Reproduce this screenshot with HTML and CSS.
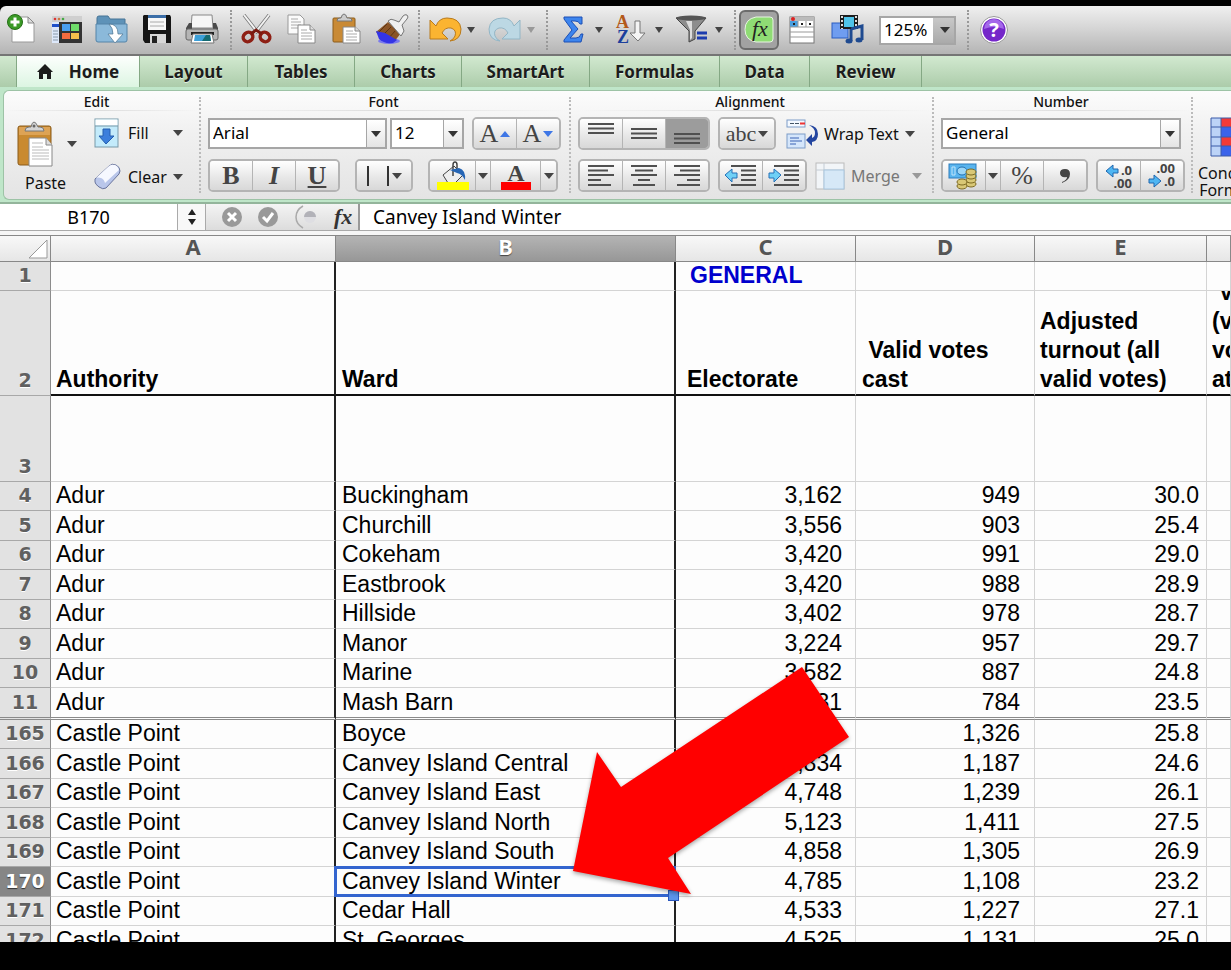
FILE: index.html
```html
<!DOCTYPE html>
<html lang="en">
<head>
<meta charset="utf-8">
<title>Workbook</title>
<link rel="stylesheet" href="styles.css">
</head>
<body>
<div class="app">
  <header class="toolbar">
    <div class="tools tools-file">
      <button class="tool" aria-label="New"><svg width="37" height="32" viewBox="0 0 37 32"><path d="M8 3h16l6 6v19H8z" fill="#fff" stroke="#999"/><path d="M24 3v6h6z" fill="#ddd" stroke="#888"/><circle cx="11" cy="8" r="7.500" fill="#3a9a26" stroke="#256f16"/><path d="M11 3.500v9M6.500 8h9" stroke="#fff" stroke-width="3"/></svg></button>
      <button class="tool" aria-label="Gallery"><svg width="37" height="32" viewBox="0 0 37 32"><rect x="3" y="2" width="30" height="27" fill="#333"/><rect x="3" y="2" width="30" height="6" fill="#cfcfcf"/><circle cx="6" cy="5" r="1.300" fill="#d33"/><circle cx="10" cy="5" r="1.300" fill="#c74"/><circle cx="14" cy="5" r="1.300" fill="#4a4"/><rect x="3" y="8" width="7" height="21" fill="#dde8fa"/><rect x="3" y="10" width="7" height="3" fill="#2050c8"/><path d="M4 17h5M4 20h5M4 23h5M4 26h5" stroke="#89a"/><rect x="13" y="10" width="8" height="7" fill="#4a9ff0"/><rect x="22" y="10" width="8" height="7" fill="#6fdc6a"/><rect x="13" y="19" width="8" height="6" fill="#f36b40"/><rect x="22" y="19" width="8" height="6" fill="#f5bf4c"/></svg></button>
      <button class="tool" aria-label="Open"><svg width="37" height="32" viewBox="0 0 37 32"><path d="M3 27V4q0-2 2-2h9l2 3h15v22z" fill="#5e92b8" stroke="#467596"/><path d="M2 10h31v16q0 2-2 2H4q-2 0-2-2z" fill="#8bb9da" stroke="#5484a8"/><path d="M15 10q9 0 9 10h5l-8 9-7-9h5q0-6-4-10z" fill="#fff" stroke="#4d7491" stroke-width=".7"/></svg></button>
      <button class="tool" aria-label="Save"><svg width="37" height="32" viewBox="0 0 37 32"><path d="M5 1h26l1 2v26H6l-2-3V2z" fill="#151515"/><path d="M9 1h18v15H9z" fill="#f7f7f7"/><path d="M9 1h18v3H9z" fill="#3b6ea8"/><path d="M11 8h14M11 12h14" stroke="#aaa"/><path d="M11 20h16v9H11z" fill="#d7d7d7"/><path d="M13 22h5v7h-5z" fill="#222"/></svg></button>
      <button class="tool" aria-label="Print"><svg width="37" height="32" viewBox="0 0 37 32"><path d="M7 14L8 1h20l1 13z" fill="#f6f6f6" stroke="#888"/><path d="M5 9h3v6h21V9h3l2 5v7H2v-7z" fill="#4a4a4a"/><rect x="2" y="15" width="32" height="11" rx="2" fill="#b5b5b5" stroke="#666"/><rect x="7" y="18" width="23" height="3" fill="#222"/><path d="M9 20h19l2 9H7z" fill="#fff" stroke="#777"/><path d="M11 21h15l1 6H10z" fill="#3c9fd8"/><path d="M18 27l4-6h4l1 6z" fill="#146b72"/></svg></button>
    </div>
    <span class="dots"></span>
    <div class="tools">
      <button class="tool" aria-label="Cut"><svg width="37" height="32" viewBox="0 0 37 32"><path d="M5 1l14 18M30 1L16 19" stroke="#777" stroke-width="3.500"/><path d="M5 1l14 18M30 1L16 19" stroke="#f2f2f2" stroke-width="2"/><ellipse cx="9" cy="23" rx="5" ry="4.500" fill="none" stroke="#8e1f14" stroke-width="3.500" transform="rotate(-40 9 23)"/><ellipse cx="26" cy="23" rx="5" ry="4.500" fill="none" stroke="#8e1f14" stroke-width="3.500" transform="rotate(40 26 23)"/><path d="M12 20l5-4 6 4" fill="none" stroke="#7a1a10" stroke-width="3"/></svg></button>
      <button class="tool" aria-label="Copy"><svg width="37" height="32" viewBox="0 0 37 32"><path d="M4 1h12l4 4v15H4z" fill="#fbfbfb" stroke="#999"/><path d="M7 5h7M7 8h10M7 11h10M7 14h10" stroke="#aaa"/><path d="M14 11h12l5 5v13H14z" fill="#fff" stroke="#888"/><path d="M26 11v5h5" fill="#ddd" stroke="#888"/><path d="M17 16h6M17 19h11M17 22h11M17 25h11" stroke="#aaa"/></svg></button>
      <button class="tool" aria-label="Paste from clipboard"><svg width="37" height="32" viewBox="0 0 37 32"><rect x="4" y="4" width="22" height="24" rx="1" fill="#c98a35" stroke="#8b5c1d"/><path d="M8 7q0-3 3-3h1q1-4 3-4t3 4h2q3 0 3 3z" fill="#ccc" stroke="#777"/><path d="M14 13h12l5 4v12H14z" fill="#fff" stroke="#888"/><path d="M26 13v4h5" fill="#ddd" stroke="#888"/><path d="M17 17h7M17 20h11M17 23h11M17 26h11" stroke="#aaa"/></svg></button>
      <button class="tool" aria-label="Format painter"><svg width="37" height="32" viewBox="0 0 37 32"><ellipse cx="15" cy="27" rx="11" ry="3" fill="#5b5bff" opacity=".7"/><path d="M14 8l13 11-7 9-9-1-9-9z" fill="#8a5426"/><path d="M13 10l-8 8M17 13l-8 8M21 17l-7 8" stroke="#5d3413"/><path d="M2 17l9 2 12 7-4 3q-9 1-14-4z" fill="#3434e6"/><path d="M14 7q3-3 6-1l5 2 4-6q2-2 4-1 2 2 0 4l-5 6 2 6-3 5z" fill="#f0f0f0" stroke="#777"/></svg></button>
    </div>
    <span class="dots"></span>
    <div class="tools">
      <button class="tool tool-menu" aria-label="Undo"><svg width="36" height="32" viewBox="0 0 36 32"><path d="M3 6v19h18l-6-6q3-6 9-5 6 2 4 8-1 3-5 5 11-1 11-12Q33 4 20 4q-8 0-11 8z" fill="#fbb431" stroke="#b97a1c"/></svg><i class="caret"></i></button>
      <button class="tool tool-menu" aria-label="Redo"><svg width="36" height="32" viewBox="0 0 36 32"><path transform="translate(36 0) scale(-1 1)" d="M3 6v19h18l-6-6q3-6 9-5 6 2 4 8-1 3-5 5 11-1 11-12Q33 4 20 4q-8 0-11 8z" fill="#bcd8e4" stroke="#93b6c6"/></svg><i class="caret caret-off"></i></button>
    </div>
    <span class="dots"></span>
    <div class="tools">
      <button class="tool tool-menu" aria-label="AutoSum"><svg width="36" height="32" viewBox="0 0 36 32"><path d="M9 3h18v7h-2q-1-3-5-3h-4l7 8-8 9h6q4 0 5-4h2l-2 8H9v-2l8-10L9 5z" fill="#3d85ee" stroke="#1c4fb4"/></svg><i class="caret"></i></button>
      <button class="tool tool-menu" aria-label="Sort"><svg width="36" height="32" viewBox="0 0 36 32"><text x="1" y="14" class="glyph-a">A</text><text x="2" y="29" class="glyph-z">Z</text><path d="M20 7h5v12h5l-7 8-8-8h5z" fill="#f4f4f4" stroke="#777"/></svg><i class="caret"></i></button>
      <button class="tool tool-menu" aria-label="Filter"><svg width="36" height="32" viewBox="0 0 36 32"><path d="M1 4h30L20 17v8l-6 3V17z" fill="#8d8d8d" stroke="#444"/><path d="M11 7h6v17l-2 2V16z" fill="#ddd"/><ellipse cx="16" cy="4" rx="15" ry="2.500" fill="#555"/><path d="M22 19h10M22 24h10" stroke="#1c3cae" stroke-width="3"/></svg><i class="caret"></i></button>
    </div>
    <span class="dots"></span>
    <div class="tools tools-view">
      <button class="tool tool-on" aria-label="Formula Builder"><svg width="34" height="32" viewBox="0 0 34 32"><path d="M14 3h14q3 0 3 3v19q0 3-3 3H14Q3 26 3 15.500T14 3z" fill="#8fdc74" stroke="#e8f5e2"/><text x="10" y="22" class="glyph-fx">fx</text></svg></button>
      <button class="tool" aria-label="Form"><svg width="36" height="32" viewBox="0 0 36 32"><rect x="6" y="3" width="24" height="26" fill="#fff" stroke="#777"/><path d="M6 3h24v4H6z" fill="#bbb"/><rect x="6" y="7" width="8" height="6" fill="#4a9fe0"/><circle cx="9" cy="5" r="2" fill="#d22"/><path d="M6 13h24M6 18h24M6 23h24M14 7v6M22 7v6" stroke="#999"/><path d="M9 10h2M17 10h2M25 10h2" stroke="#222" stroke-width="2"/></svg></button>
      <button class="tool" aria-label="Media"><svg width="36" height="32" viewBox="0 0 36 32"><rect x="3" y="9" width="16" height="15" fill="#6f9df0" stroke="#2b5cc0"/><rect x="11" y="1" width="18" height="14" fill="#1d1d1d"/><rect x="15" y="3" width="10" height="10" fill="#4fc4ea"/><path d="M13 2v13M27 2v13" stroke="#ddd" stroke-width="2" stroke-dasharray="2 2"/><path d="M22 15l11-3v14M22 15v12" stroke="#1f4a90" stroke-width="3" fill="none"/><ellipse cx="20" cy="27" rx="3.500" ry="2.500" fill="#1f4a90"/><ellipse cx="30" cy="26" rx="3.500" ry="2.500" fill="#1f4a90"/></svg></button>
    </div>
    <label class="combo combo-zoom"><select aria-label="Zoom"><option>125%</option></select></label>
    <span class="dots dots-end"></span>
    <button class="tool tool-help" aria-label="Help"><svg width="30" height="30" viewBox="0 0 30 30"><circle cx="15" cy="15" r="13.500" fill="#fff" stroke="#999"/><circle cx="15" cy="15" r="11.500" fill="#7527c9"/><path d="M5 14a10 10 0 0 1 20 0q-10-4-20 0z" fill="#a468ea"/><text x="15" y="22" text-anchor="middle" class="glyph-help">?</text></svg></button>
  </header>

  <nav class="tabs">
    <span class="tab-stub"></span>
    <a class="tab tab-active" href="#home"><svg width="16" height="15" viewBox="0 0 16 15"><path d="M8 0l8 8h-2v7h-4v-5H6v5H2V8H0z" fill="#1c1c1c"/></svg>Home</a>
    <a class="tab" href="#layout">Layout</a>
    <a class="tab" href="#tables">Tables</a>
    <a class="tab" href="#charts">Charts</a>
    <a class="tab" href="#smartart">SmartArt</a>
    <a class="tab" href="#formulas">Formulas</a>
    <a class="tab" href="#data">Data</a>
    <a class="tab" href="#review">Review</a>
  </nav>

  <div class="ribbon">
    <div class="panel">
      <section class="group group-edit">
        <h2>Edit</h2>
        <div class="edit-body">
          <button class="plain paste"><span class="paste-icon"><svg width="36" height="46" viewBox="0 0 36 46"><rect x="1" y="5" width="33" height="39" rx="2" fill="#c98a30" stroke="#8a5a18"/><path d="M2 6h31v8H2z" fill="#dda355"/><path d="M8 10q0-4 4-4h2q1-5 3-5t4 5h2q4 0 4 4z" fill="#d4d4d4" stroke="#777"/><circle cx="17" cy="5" r="1.500" fill="#666"/><path d="M12 17h17l6 7v21H12z" fill="#fff" stroke="#888"/><path d="M29 17v7h6" fill="#ddd" stroke="#888"/><path d="M15 22h11M15 26h11M15 29h17M15 32h17M15 35h17M15 38h17" stroke="#bbb"/></svg><i class="caret"></i></span>Paste</button>
          <div class="edit-side">
            <button class="plain"><svg width="28" height="30" viewBox="0 0 28 30"><rect x="2" y="1" width="23" height="28" fill="#c3ebfb" stroke="#7899a8"/><rect x="2.500" y="1.500" width="22" height="6" fill="#fff"/><path d="M2 8h23" stroke="#7899a8"/><path d="M10 11h7v7h4l-8 8-7-8h4z" fill="#3b7fdc" stroke="#245fae"/></svg><span class="side-name">Fill</span><i class="caret"></i></button>
            <button class="plain"><svg width="28" height="30" viewBox="0 0 28 30"><path d="M2 17L16 4q3-3 7-1t4 6l-1 3L13 26q-3 2-7-1t-4-5z" fill="#b9c6ea" stroke="#69749c"/><path d="M3 16L16 4q3-2 6-1t4 5L12 21q-1-4-4-5t-5 0z" fill="#f6f8ff"/></svg><span class="side-name">Clear</span><i class="caret"></i></button>
          </div>
        </div>
      </section>
      <span class="rule"></span>
      <section class="group group-font">
        <h2>Font</h2>
        <div class="row">
          <label class="combo combo-font"><select aria-label="Font"><option>Arial</option></select></label>
          <label class="combo combo-size"><select aria-label="Font size"><option>12</option></select></label>
          <div class="seg"><button class="serif" aria-label="Grow font">A<i class="blue-up"></i></button><button class="serif" aria-label="Shrink font">A<i class="blue-down"></i></button></div>
        </div>
        <div class="row">
          <div class="seg"><button class="serif bold">B</button><button class="serif bold italic">I</button><button class="serif bold under">U</button></div>
          <div class="seg push-b"><button class="w58" aria-label="Borders"><svg width="24" height="22" viewBox="0 0 24 22"><path d="M2 1v20M22 1v20" stroke="#333" stroke-width="2"/></svg><i class="caret"></i></button></div>
          <div class="seg push-b"><button class="w48" aria-label="Fill color"><svg width="32" height="31" viewBox="0 0 32 31"><path d="M6 15L17 6l9 9-8 8H11z" fill="#eee" stroke="#444"/><path d="M16 16V5q0-3 2-3t2 3v5" fill="none" stroke="#444" stroke-width="1.500"/><path d="M13 10l9-2q7 2 6 12-3-6-8-7z" fill="#2766b5"/><rect x="0" y="22" width="32" height="8" fill="#ff0"/></svg></button><button class="w15" aria-label="Fill color menu"><i class="caret"></i></button><button class="w50" aria-label="Font color"><svg width="30" height="31" viewBox="0 0 30 31"><text x="15" y="21" text-anchor="middle" class="glyph-color">A</text><rect x="0" y="22" width="30" height="8" fill="#f00"/></svg></button><button class="w15" aria-label="Font color menu"><i class="caret"></i></button></div>
        </div>
      </section>
      <span class="rule"></span>
      <section class="group group-align">
        <h2>Alignment</h2>
        <div class="row">
          <div class="seg"><button aria-label="Align top"><svg width="26" height="26" viewBox="0 0 26 26"><path d="M0 3h26M0 7.500h26M0 12h26" class="ln"/></svg></button><button aria-label="Align middle"><svg width="26" height="26" viewBox="0 0 26 26"><path d="M0 8h26M0 12.500h26M0 17h26" class="ln"/></svg></button><button class="seg-on" aria-label="Align bottom"><svg width="26" height="26" viewBox="0 0 26 26"><path d="M0 13h26M0 17.500h26M0 22h26" class="ln"/></svg></button></div>
          <div class="seg"><button class="w58 abc">abc<i class="caret"></i></button></div>
          <button class="plain wrap"><svg width="32" height="30" viewBox="0 0 32 30"><rect x="1" y="1" width="18" height="7" fill="#f4f9ff" stroke="#7c9cc8"/><path d="M4 4.500h4M9 4.500h4" stroke="#456"/><path d="M14 4.500h5" stroke="#e33" stroke-width="2"/><rect x="1" y="15" width="18" height="14" fill="#d5e6fb" stroke="#7c9cc8"/><path d="M4 19h9M4 22h12M4 25h6" stroke="#3b62b4"/><path d="M23 6q9 1 9 9 0 7-6 8v4l-6-6 6-6v4q3-1 3-5 0-5-6-8z" fill="#23459f"/></svg>Wrap Text<i class="caret"></i></button>
        </div>
        <div class="row">
          <div class="seg"><button aria-label="Align left"><svg width="26" height="26" viewBox="0 0 26 26"><path d="M0 3h26M0 7.500h20M0 12h26M0 17h13M0 22h23" class="ln"/></svg></button><button aria-label="Center"><svg width="26" height="26" viewBox="0 0 26 26"><path d="M0 3h26M4 7.500h18M0 12h26M7 17h12M2 22h22" class="ln"/></svg></button><button aria-label="Align right"><svg width="26" height="26" viewBox="0 0 26 26"><path d="M0 3h26M6 7.500h20M0 12h26M13 17h13M3 22h23" class="ln"/></svg></button></div>
          <div class="seg"><button aria-label="Decrease indent"><svg width="32" height="26" viewBox="0 0 32 26"><path d="M6 3h25M16 7.500h15M16 12h15M16 17h15M6 22h25" class="ln"/><path d="M0 12l7-6v4h5v5H7v4z" fill="#6fd0f6" stroke="#2470b8"/></svg></button><button aria-label="Increase indent"><svg width="32" height="26" viewBox="0 0 32 26"><path d="M6 3h25M16 7.500h15M16 12h15M16 17h15M6 22h25" class="ln"/><path d="M13 12L6 6v4H1v5h5v4z" fill="#6fd0f6" stroke="#2470b8"/></svg></button></div>
          <button class="plain merge" disabled><svg width="30" height="28" viewBox="0 0 30 28"><rect x="1" y="1" width="28" height="26" fill="#f2f5f8" stroke="#bbb"/><path d="M9 1v26M1 8h28" stroke="#c4ccd4"/><rect x="9" y="8" width="20" height="19" fill="#d6e8f7" stroke="#a9c6de"/></svg>Merge<i class="caret caret-off"></i></button>
        </div>
      </section>
      <span class="rule"></span>
      <section class="group group-number">
        <h2>Number</h2>
        <div class="row">
          <label class="combo combo-number"><select aria-label="Number format"><option>General</option></select></label>
        </div>
        <div class="row">
          <div class="seg"><button aria-label="Currency"><svg width="32" height="28" viewBox="0 0 32 28"><rect x="1" y="2" width="27" height="14" fill="#58b4ee" stroke="#2c7dbc"/><ellipse cx="14" cy="9" rx="5" ry="4" fill="#9bd6f7" stroke="#2471b0"/><path d="M4 5h3v8H4z" fill="none" stroke="#bfe4fa"/><g fill="#d9c876" stroke="#7d6a22"><ellipse cx="23" cy="22" rx="5" ry="3"/><ellipse cx="23" cy="18" rx="5" ry="3"/><ellipse cx="23" cy="14" rx="5" ry="3"/><ellipse cx="23" cy="10" rx="5" ry="3"/><ellipse cx="14" cy="24" rx="5" ry="3"/><ellipse cx="14" cy="20" rx="5" ry="3"/></g></svg></button><button class="w15" aria-label="Currency menu"><i class="caret"></i></button><button class="serif" aria-label="Percent">%</button><button aria-label="Comma style"><svg width="12" height="16" viewBox="0 0 12 16"><path d="M6 1q5 0 5 5 0 6-8 9v-1q5-2 5-5Q1 10 1 5q0-4 5-4z" fill="#444"/></svg></button></div>
          <div class="seg"><button aria-label="Increase decimals"><svg width="30" height="28" viewBox="0 0 30 28"><path d="M2 9l7-6v4h5v4H9v4z" fill="#4fb6f2" stroke="#1f66ae"/><text x="28" y="13" text-anchor="end" class="glyph-dec">.0</text><text x="28" y="26" text-anchor="end" class="glyph-dec">.00</text></svg></button><button aria-label="Decrease decimals"><svg width="30" height="28" viewBox="0 0 30 28"><path d="M14 19l-7-6v4H2v4h5v4z" fill="#4fb6f2" stroke="#1f66ae"/><text x="28" y="11" text-anchor="end" class="glyph-dec">.00</text><text x="28" y="24" text-anchor="end" class="glyph-dec">.0</text></svg></button></div>
        </div>
      </section>
      <span class="rule"></span>
      <section class="group group-format">
        <button class="plain conditional"><svg width="40" height="40" viewBox="0 0 40 40"><rect x="1" y="1" width="38" height="38" fill="#bcd3f7"/><path d="M11 1h14v9H11zM11 20h14v9H11z" fill="#f33a36"/><path d="M11 10h14v10H11zM11 29h14v10H11z" fill="#3a63ea"/><path d="M1 1h38v38H1zM11 1v38M25 1v38M1 10h38M1 20h38M1 29h38" fill="none" stroke="#3a5aa8"/></svg>Conditional<br>Formatting</button>
      </section>
    </div>
  </div>

  <div class="formula-bar">
    <input class="name-box" aria-label="Name box" value="B170">
    <button class="stepper" aria-label="Name list"><svg width="10" height="18" viewBox="0 0 10 18"><path d="M5 1l4 6H1zM5 17l4-6H1z" fill="#222"/></svg></button>
    <div class="formula-tools">
      <button aria-label="Cancel"><svg width="20" height="20" viewBox="0 0 20 20"><circle cx="10" cy="10" r="10" fill="#999"/><path d="M6 6l8 8M14 6l-8 8" stroke="#fff" stroke-width="3"/></svg></button>
      <button aria-label="Enter"><svg width="20" height="20" viewBox="0 0 20 20"><circle cx="10" cy="10" r="10" fill="#999"/><path d="M5 10l4 4 6-8" fill="none" stroke="#fff" stroke-width="3"/></svg></button>
      <button aria-label="Options"><svg width="24" height="24" viewBox="0 0 24 24"><path d="M9 1Q2 5 2 12t7 11" fill="none" stroke="#aaa" stroke-width="1.500"/><circle cx="16" cy="12" r="6" fill="#dedee2"/><path d="M10 12a6 6 0 0 1 12 0z" fill="#b2b2b8"/></svg></button>
      <button class="fx" aria-label="Insert function">fx</button>
    </div>
    <input class="formula" aria-label="Formula" value="Canvey Island Winter">
  </div>

  <main class="sheet">
    <table>
      <colgroup><col class="c-num"><col class="c-a"><col class="c-b"><col class="c-c"><col class="c-d"><col class="c-e"><col></colgroup>
      <thead>
        <tr><th class="corner"><svg width="20" height="20" viewBox="0 0 20 20"><path d="M19 1v18H1z" fill="#fff" stroke="#999"/></svg></th><th>A</th><th class="col-on">B</th><th>C</th><th>D</th><th>E</th><th></th></tr>
      </thead>
      <tbody class="top">
        <tr><th scope="row">1</th><td></td><td></td><td class="general">GENERAL</td><td></td><td></td><td></td></tr>
        <tr class="titles"><th scope="row">2</th><td>Authority</td><td>Ward</td><td class="electorate">Electorate</td><td>&nbsp;Valid votes<br>cast</td><td>Adjusted<br>turnout (all<br>valid votes)</td><td><div class="clip"><span>&nbsp;V<br>(v<br>vo<br>at</span></div></td></tr>
        <tr class="spacer"><th scope="row">3</th><td></td><td></td><td></td><td></td><td></td><td></td></tr>
      </tbody>
      <tbody class="data frozen">
        <tr><th scope="row">4</th><td>Adur</td><td>Buckingham</td><td>3,162</td><td>949</td><td>30.0</td><td></td></tr>
        <tr><th scope="row">5</th><td>Adur</td><td>Churchill</td><td>3,556</td><td>903</td><td>25.4</td><td></td></tr>
        <tr><th scope="row">6</th><td>Adur</td><td>Cokeham</td><td>3,420</td><td>991</td><td>29.0</td><td></td></tr>
        <tr><th scope="row">7</th><td>Adur</td><td>Eastbrook</td><td>3,420</td><td>988</td><td>28.9</td><td></td></tr>
        <tr><th scope="row">8</th><td>Adur</td><td>Hillside</td><td>3,402</td><td>978</td><td>28.7</td><td></td></tr>
        <tr><th scope="row">9</th><td>Adur</td><td>Manor</td><td>3,224</td><td>957</td><td>29.7</td><td></td></tr>
        <tr><th scope="row">10</th><td>Adur</td><td>Marine</td><td>3,582</td><td>887</td><td>24.8</td><td></td></tr>
        <tr><th scope="row">11</th><td>Adur</td><td>Mash Barn</td><td>3,331</td><td>784</td><td>23.5</td><td></td></tr>
      </tbody>
      <tbody class="data">
        <tr><th scope="row">165</th><td>Castle Point</td><td>Boyce</td><td></td><td>1,326</td><td>25.8</td><td></td></tr>
        <tr><th scope="row">166</th><td>Castle Point</td><td>Canvey Island Central</td><td>4,834</td><td>1,187</td><td>24.6</td><td></td></tr>
        <tr><th scope="row">167</th><td>Castle Point</td><td>Canvey Island East</td><td>4,748</td><td>1,239</td><td>26.1</td><td></td></tr>
        <tr><th scope="row">168</th><td>Castle Point</td><td>Canvey Island North</td><td>5,123</td><td>1,411</td><td>27.5</td><td></td></tr>
        <tr><th scope="row">169</th><td>Castle Point</td><td>Canvey Island South</td><td>4,858</td><td>1,305</td><td>26.9</td><td></td></tr>
        <tr><th scope="row" class="row-on">170</th><td>Castle Point</td><td class="selected">Canvey Island Winter</td><td>4,785</td><td>1,108</td><td>23.2</td><td></td></tr>
        <tr><th scope="row">171</th><td>Castle Point</td><td>Cedar Hall</td><td>4,533</td><td>1,227</td><td>27.1</td><td></td></tr>
        <tr><th scope="row">172</th><td>Castle Point</td><td>St. Georges</td><td>4,525</td><td>1,131</td><td>25.0</td><td></td></tr>
      </tbody>
    </table>
    <svg class="pointer" width="277" height="228" viewBox="0 0 277 228"><path d="M229 0l47 70L95 191l23 36L0 204 24 85l24 35z" fill="#f00"/></svg>
  </main>
</div>
</body>
</html>
```
FILE: styles.css
```css
* { box-sizing: border-box; }
body {
  margin: 0;
  background: #000;
  color: #111;
  font-family: "Noto Sans", "Open Sans", sans-serif;
}
button, select, input { font: inherit; color: inherit; margin: 0; }
button { border: 0; padding: 0; background: none; }
svg { display: block; flex: none; overflow: visible; }
.app {
  height: 100vh;
  padding: 6px 0 28px;
  display: flex;
  flex-direction: column;
  overflow: hidden;
}

/* Standard toolbar */
.toolbar {
  flex: none;
  height: 50px;
  display: flex;
  align-items: center;
  overflow: hidden;
  border-radius: 6px 0 0 0;
  border-bottom: 2px solid #757575;
  background: linear-gradient(#f0f0f0, #d6d6d6 45%, #b4b4b4);
}
.tools { display: flex; align-items: center; flex: none; }
.tools-file { padding-right: 2px; }
.tools-view { padding-right: 10px; }
.tool {
  width: 45px;
  height: 40px;
  display: flex;
  align-items: center;
  justify-content: center;
  flex: none;
}
.tool-menu { width: 60px; justify-content: flex-start; padding-left: 4px; gap: 4px; }
.tool-on {
  width: 40px;
  border: 2px solid #6c6c6c;
  border-radius: 6px;
  background: #a2a2a2;
}
.tool-help { width: 43px; }
.dots { flex: none; width: 8px; height: 40px; display: flex; justify-content: center; }
.dots::before { content: ""; border-left: 2px dotted #999; }
.dots-end { margin-left: 8px; }
.caret {
  flex: none;
  border: 5px solid transparent;
  border-top: 6px solid #444;
  border-bottom: 0;
}
.tool .caret { border-width: 6px 4px 0; }
.caret.caret-off { border-top-color: #999; }
.glyph-a { font: bold 18px "Liberation Serif", serif; fill: #b3591a; }
.glyph-z { font: bold 18px "Liberation Serif", serif; fill: #1c3f9c; }
.glyph-fx { font: italic 22px "Liberation Serif", serif; fill: #222; }
.glyph-help { font: bold 20px "Noto Sans", sans-serif; fill: #fff; }
.glyph-color { font: bold 24px "Liberation Serif", serif; fill: #444; }
.glyph-dec { font: bold 13px "Noto Sans", sans-serif; fill: #444; }

/* Combo boxes */
.combo { position: relative; display: block; flex: none; height: 31px; font-size: 17px; }
.combo select {
  appearance: none;
  width: 100%;
  height: 100%;
  padding: 0 0 2px 3px;
  border: 2px solid #a6a6a6;
  border-radius: 0;
  color: #000;
  background: linear-gradient(90deg, #a6a6a6 1px, transparent 1px) right / 19px 100% no-repeat,
    linear-gradient(#fff, #e4e4e4) right / 19px 100% no-repeat, #fff;
}
.combo::after {
  content: "";
  position: absolute;
  right: 6px;
  top: 13px;
  border: 5px solid transparent;
  border-top: 6px solid #333;
  border-bottom: 0;
  pointer-events: none;
}
.combo-zoom { width: 77px; height: 29px; }
.combo-zoom select {
  background: linear-gradient(#c8c8c8, #aaa) right / 21px 100% no-repeat, #fff;
}
.combo-zoom::after { top: 11px; }
.combo-font { width: 179px; }
.combo-size { width: 74px; }
.combo-number { width: 240px; }

/* Ribbon tabs */
.tabs {
  flex: none;
  height: 31px;
  display: grid;
  grid-template-columns: 17px 123px 108px 107px 107px 128px 130px 90px 112px;
  background: linear-gradient(#d2e9d0, #acccaa);
  font-size: 17px;
  font-weight: 700;
}
.tab {
  display: flex;
  align-items: center;
  justify-content: center;
  gap: 16px;
  color: #1c1c1c;
  text-decoration: none;
  border-right: 1px solid #84a884;
  text-shadow: 0 1px 0 #e4f2e2;
}
.tab-stub { border-right: 1px solid #84a884; }
.tab-active { background: linear-gradient(#fdfffd, #dcf5e2); }

/* Ribbon */
.ribbon {
  flex: none;
  height: 117px;
  padding: 3px 0 2px 3px;
  background: #bfe6c9;
  border-bottom: 2px solid #93b59b;
}
.panel {
  height: 100%;
  display: flex;
  overflow: hidden;
  border: 1px solid #9dc3a6;
  border-right: 0;
  border-radius: 6px 0 0 6px;
  background: linear-gradient(#fcfcfc, #f0f0f0 40%, #e4e4e4);
}
.group { flex: none; display: flex; flex-direction: column; overflow: hidden; }
.group h2 {
  margin: 0 0 6px;
  padding-right: 10px;
  height: 20px;
  line-height: 22px;
  font-size: 14px;
  font-weight: 500;
  text-align: center;
  background: linear-gradient(90deg, transparent, #ddd 50%, transparent) bottom / 100% 1px no-repeat;
}
.group-edit { width: 195px; }
.group-font { width: 368px; padding-left: 7px; }
.group-align { width: 361px; padding-left: 7px; }
.group-number { width: 257px; padding-left: 7px; }
.group-format { flex: 1 1 0; }
.rule { flex: none; width: 2px; margin: 6px 0; border-left: 2px dotted #bbb; }
.row { height: 33px; margin-bottom: 9px; display: flex; align-items: center; gap: 8px; }
.row:last-child { margin-bottom: 0; }
.combo-font + .combo-size { margin-left: -5px; }
.push-b { margin-left: 7px; }
.plain { display: flex; align-items: center; font-size: 16px; color: #111; white-space: nowrap; }
.edit-body { display: flex; }
.paste { width: 85px; padding: 4px 0 0 13px; flex-direction: column; align-items: flex-start; line-height: 20px; text-indent: 8px; }
.paste-icon { display: flex; align-items: center; gap: 14px; margin-bottom: 6px; }
.edit-side { display: flex; flex-direction: column; gap: 12px; padding-left: 4px; }
.edit-side .plain { height: 32px; gap: 7px; }
.side-name { width: 38px; text-align: left; }
.seg { display: flex; flex: none; height: 33px; border: 2px solid #b4b4b4; border-radius: 5px; overflow: hidden; }
.seg button {
  width: 43px;
  display: flex;
  align-items: center;
  justify-content: center;
  gap: 2px;
  border-right: 1px solid #b4b4b4;
  background: linear-gradient(#fff, #e6e6e6 60%, #d8d8d8);
}
.seg button:last-child { border-right: 0; width: 42px; }
.seg button.w58 { width: 54px; }
.seg button.w48 { width: 46px; }
.seg button.w50 { width: 50px; }
.seg button.w15 { width: 15px; }
.seg .seg-on { background: #9c9c9c; }
.serif { font-family: "Liberation Serif", serif; font-size: 26px; color: #444; line-height: 28px; }
.bold { font-weight: 700; }
.italic { font-style: italic; }
.under { text-decoration: underline; }
.abc { font-family: "Liberation Serif", serif; font-size: 22px; color: #444; }
.blue-up { border: 5px solid transparent; border-bottom: 6px solid #3f77e6; border-top: 0; }
.blue-down { border: 5px solid transparent; border-top: 6px solid #3f77e6; border-bottom: 0; }
.ln { stroke: #505050; stroke-width: 2; fill: none; }
.wrap { gap: 6px; margin-left: 2px; }
.merge { gap: 6px; color: #777; }
.merge .caret { margin-left: 6px; }
.conditional { padding: 26px 0 0 5px; flex-direction: column; align-items: flex-start; line-height: 17px; }
.conditional svg { margin: 0 0 8px 12px; }

/* Formula bar */
.formula-bar {
  flex: none;
  height: 31px;
  display: flex;
  padding-bottom: 4px;
  background: linear-gradient(#aaa, #aaa) left 0 bottom 4px / 100% 1px no-repeat, #f6f6f6;
  font-size: 18px;
}
.formula-bar input { height: 26px; border: 0; padding: 0; background: #fff; color: #000; outline: 0; }
.name-box { width: 177px; flex: none; text-align: center; }
.stepper {
  width: 29px;
  height: 26px;
  flex: none;
  display: flex;
  align-items: center;
  justify-content: center;
  border: 1px solid #aaa;
  border-width: 0 1px;
  background: #f8f8f8;
}
.formula-tools {
  width: 154px;
  height: 26px;
  flex: none;
  display: flex;
  align-items: center;
  gap: 16px;
  padding-left: 16px;
  border-right: 2px solid #999;
  background: linear-gradient(#f4f4f4, #dcdcdc);
}
.fx { font: italic bold 22px "Liberation Serif", serif; color: #333; }
.formula-bar .formula { flex: 1; min-width: 0; padding-left: 13px; font-size: 19px; }

/* Worksheet */
.sheet { position: relative; flex: 1; min-height: 0; overflow: hidden; background: #fdfdfd; }
table {
  width: 100%;
  table-layout: fixed;
  border-collapse: separate;
  border-spacing: 0;
  font: 23px "Liberation Sans", Arial, sans-serif;
  line-height: 26px;
  color: #000;
}
.c-num { width: 51px; }
.c-a { width: 285px; }
.c-b { width: 340px; }
.c-c { width: 180px; }
.c-d { width: 179px; }
.c-e { width: 172px; }
th, td { padding: 0 0 2px; overflow: hidden; white-space: nowrap; vertical-align: bottom; }
thead th {
  height: 27px;
  padding: 0 0 5px;
  border: 1px solid #888;
  border-left: 0;
  background: linear-gradient(#f8f8f8, #e6e6e6);
  font: bold 22px "Noto Sans", sans-serif;
  line-height: 20px;
  color: #555;
}
thead .col-on { background: linear-gradient(#b4b4b4, #979797); color: #fff; text-shadow: 0 1px 1px #444; }
thead .corner { padding: 0; }
.corner svg { margin: 0 2px 2px auto; }
tbody th {
  padding: 0 0 2px;
  border-right: 1px solid #8c8c8c;
  border-bottom: 1px solid #a8a8a8;
  background: #e2e2e2;
  font: bold 19px "DejaVu Sans", sans-serif;
  line-height: 26px;
  color: #606060;
  text-shadow: 0 1px 0 #fff;
}
tbody .row-on { background: #868686; color: #fff; text-shadow: 0 1px 1px #333; }
td { padding-left: 6px; border-right: 1px solid #d4d4d4; border-bottom: 1px solid #d4d4d4; }
td:nth-child(2) { padding-left: 5px; }
td:nth-child(2), td:nth-child(3) { border-right: 2px solid #222; }
td:nth-child(6), td:nth-child(7) { padding-left: 5px; }
.top tr { height: 29px; }
.top .titles { height: 105px; }
.top .spacer { height: 86px; }
.titles td { border-bottom: 2px solid #111; font-weight: 700; line-height: 29px; padding-bottom: 0; }
.top .general { padding-left: 14px; font-weight: 700; color: #0000cd; }
.titles .electorate { padding-left: 11px; }
.clip { height: 103px; display: flex; flex-direction: column; justify-content: flex-end; overflow: hidden; }
.data tr { height: 30px; }
.data tr:nth-child(odd) { height: 29px; }
.data td:nth-child(4) { text-align: right; padding-right: 13px; }
.data td:nth-child(5) { text-align: right; padding-right: 14px; }
.data td:nth-child(6) { text-align: right; padding-right: 7px; }
.frozen tr:last-child { height: 32px; }
.frozen tr:last-child > * { border-bottom: 3px double #8a8a8a; }
td.selected { position: relative; overflow: visible; }
td.selected::before {
  content: "";
  position: absolute;
  inset: -1px -2px -1px -2px;
  border: 3px solid #3465cf;
}
td.selected::after {
  content: "";
  position: absolute;
  right: -5px;
  bottom: -5px;
  width: 9px;
  height: 9px;
  border: 1px solid #2a57bd;
  background: #5b93ea;
}
.pointer {
  position: absolute;
  left: 573px;
  top: 432px;
  filter: drop-shadow(0 2px 2px rgba(0, 0, 0, .35));
}
```
